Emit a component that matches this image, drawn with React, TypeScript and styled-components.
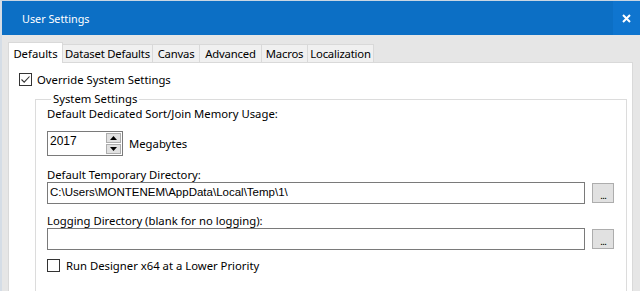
import { createGlobalStyle } from 'styled-components';
import styled from 'styled-components';

const GlobalStyle = createGlobalStyle`
  html, body {
    margin: 0;
    padding: 0;
    background: #e6e6e6;
  }
  * {
    box-sizing: border-box;
  }
`;

const Window = styled.div`
  width: 640px;
  height: 291px;
  display: flex;
  flex-direction: column;
  background: #e6e6e6;
  border-left: 2px solid #d5dde6;
  border-top: 1px solid #c9d6e3;
  font-family: 'Noto Sans', 'Open Sans', sans-serif;
  font-size: 11.3px;
  color: #000;
  overflow: hidden;
`;

const TitleBar = styled.div`
  height: 34px;
  flex: none;
  display: flex;
  align-items: center;
  justify-content: space-between;
  background: #0c6fc5;
  color: #fff;
  margin-left: -2px;
  padding-left: 22px;
  .title {
    font-size: 10.8px;
  }
`;

const CloseButton = styled.div`
  width: 27px;
  height: 100%;
  display: flex;
  align-items: center;
  justify-content: center;
  background: #0f75cf;
  svg {
    width: 9px;
    height: 9px;
  }
`;

const Body = styled.div`
  flex: 1;
  display: flex;
  flex-direction: column;
  padding: 7px 7px 0 6px;
`;

const TabStrip = styled.div`
  display: flex;
  align-items: flex-end;
  height: 21px;
  position: relative;
  z-index: 1;
  margin-bottom: -1px;
`;

const Tab = styled.div<{ $active?: boolean; $w: number }>`
  width: ${(p) => p.$w + 1}px;
  height: ${(p) => (p.$active ? '21px' : '19px')};
  display: flex;
  align-items: center;
  justify-content: center;
  background: ${(p) => (p.$active ? '#fff' : '#f0f0f0')};
  border: 1px solid #d9d9d9;
  border-bottom: ${(p) => (p.$active ? 'none' : '1px solid #d9d9d9')};
  margin-left: -1px;
  white-space: nowrap;
  overflow: hidden;
  letter-spacing: ${(p) => (p.$active ? '0' : '-0.2px')};
  &:first-child {
    margin-left: 0;
  }
`;

const Panel = styled.div`
  flex: 1;
  background: #fff;
  border: 1px solid #d9d9d9;
  border-bottom: none;
  padding: 8px 0 0 10px;
`;

const CheckRow = styled.label`
  display: flex;
  align-items: center;
  gap: 5px;
  height: 16px;
`;

const Box = styled.span`
  width: 13px;
  height: 13px;
  border: 1px solid #333;
  background: #fff;
  display: flex;
  align-items: center;
  justify-content: center;
  flex: none;
  svg {
    width: 11px;
    height: 11px;
  }
`;

const GroupBox = styled.fieldset`
  margin: 5px 5px 0 16px;
  padding: 0 12px 0 11px;
  border: 1px solid #dcdcdc;
  border-bottom: none;
  min-height: 200px;
  legend {
    padding: 0 2px;
    margin-left: 4px;
    line-height: 14px;
  }
`;

const FieldLabel = styled.div`
  height: 16px;
  line-height: 16px;
  margin-top: 0;
`;

const SpinRow = styled.div`
  display: flex;
  align-items: center;
  gap: 6px;
  margin-top: 9px;
`;

const Spinner = styled.div`
  width: 76px;
  height: 25px;
  border: 1px solid #7a7a7a;
  display: flex;
  justify-content: space-between;
  padding: 1px;
  .value {
    font-family: 'Liberation Sans', Arial, sans-serif;
    font-size: 12px;
    padding: 1px 0 0 1px;
  }
`;

const SpinButtons = styled.div`
  width: 15px;
  display: flex;
  flex-direction: column;
  gap: 1px;
`;

const SpinButton = styled.div`
  flex: 1;
  background: #e1e1e1;
  border: 1px solid #adadad;
  display: flex;
  align-items: center;
  justify-content: center;
  svg {
    width: 7px;
    height: 4px;
  }
`;

const DirLabel = styled(FieldLabel)<{ $gap: number }>`
  margin-top: ${(p) => p.$gap}px;
`;

const PathRow = styled.div`
  display: flex;
  align-items: flex-start;
  gap: 7px;
  margin-top: -1px;
`;

const PathInput = styled.div`
  flex: 1;
  height: 22px;
  border: 1px solid #7a7a7a;
  background: #fff;
  font-family: 'Liberation Sans', Arial, sans-serif;
  font-size: 11.5px;
  padding: 3px 0 0 2px;
  white-space: nowrap;
  overflow: hidden;
`;

const BrowseButton = styled.div`
  width: 22px;
  height: 20px;
  margin-top: 1px;
  background: #e1e1e1;
  border: 1px solid #adadad;
  display: flex;
  align-items: flex-end;
  justify-content: center;
  font-family: 'Liberation Sans', Arial, sans-serif;
  font-size: 11px;
  line-height: 14px;
  letter-spacing: -1px;
`;

const LowerCheck = styled(CheckRow)`
  margin-top: 7px;
  gap: 6px;
`;

const Check = () => (
  <svg viewBox="0 0 11 11">
    <path d="M1.5 5.5 L4.2 8.2 L9.5 2.5" fill="none" stroke="#333" strokeWidth="1.1" />
  </svg>
);

const Arrow = ({ up }: { up?: boolean }) => (
  <svg viewBox="0 0 7 4">
    <path d={up ? 'M0 4 L3.5 0 L7 4 Z' : 'M0 0 L3.5 4 L7 0 Z'} fill="#000" />
  </svg>
);

const tabs: [string, number][] = [
  ['Defaults', 54],
  ['Dataset Defaults', 90],
  ['Canvas', 47],
  ['Advanced', 62],
  ['Macros', 46],
  ['Localization', 66],
];

export default function App() {
  return (
    <>
      <GlobalStyle />
      <Window>
        <TitleBar>
          <span className="title">User Settings</span>
          <CloseButton>
            <svg viewBox="0 0 9 9">
              <path d="M1 1 L8 8 M8 1 L1 8" stroke="#fff" strokeWidth="2" />
            </svg>
          </CloseButton>
        </TitleBar>
        <Body>
          <TabStrip>
            {tabs.map(([t, w], i) => (
              <Tab key={t} $active={i === 0} $w={w}>
                {t}
              </Tab>
            ))}
          </TabStrip>
          <Panel>
            <CheckRow>
              <Box>
                <Check />
              </Box>
              Override System Settings
            </CheckRow>
            <GroupBox>
              <legend>System Settings</legend>
              <FieldLabel>Default Dedicated Sort/Join Memory Usage:</FieldLabel>
              <SpinRow>
                <Spinner>
                  <span className="value">2017</span>
                  <SpinButtons>
                    <SpinButton>
                      <Arrow up />
                    </SpinButton>
                    <SpinButton>
                      <Arrow />
                    </SpinButton>
                  </SpinButtons>
                </Spinner>
                Megabytes
              </SpinRow>
              <DirLabel $gap={11}>Default Temporary Directory:</DirLabel>
              <PathRow>
                <PathInput>C:\Users\MONTENEM\AppData\Local\Temp\1\</PathInput>
                <BrowseButton>...</BrowseButton>
              </PathRow>
              <DirLabel $gap={9}>Logging Directory (blank for no logging):</DirLabel>
              <PathRow>
                <PathInput />
                <BrowseButton>...</BrowseButton>
              </PathRow>
              <LowerCheck>
                <Box />
                Run Designer x64 at a Lower Priority
              </LowerCheck>
            </GroupBox>
          </Panel>
        </Body>
      </Window>
    </>
  );
}
